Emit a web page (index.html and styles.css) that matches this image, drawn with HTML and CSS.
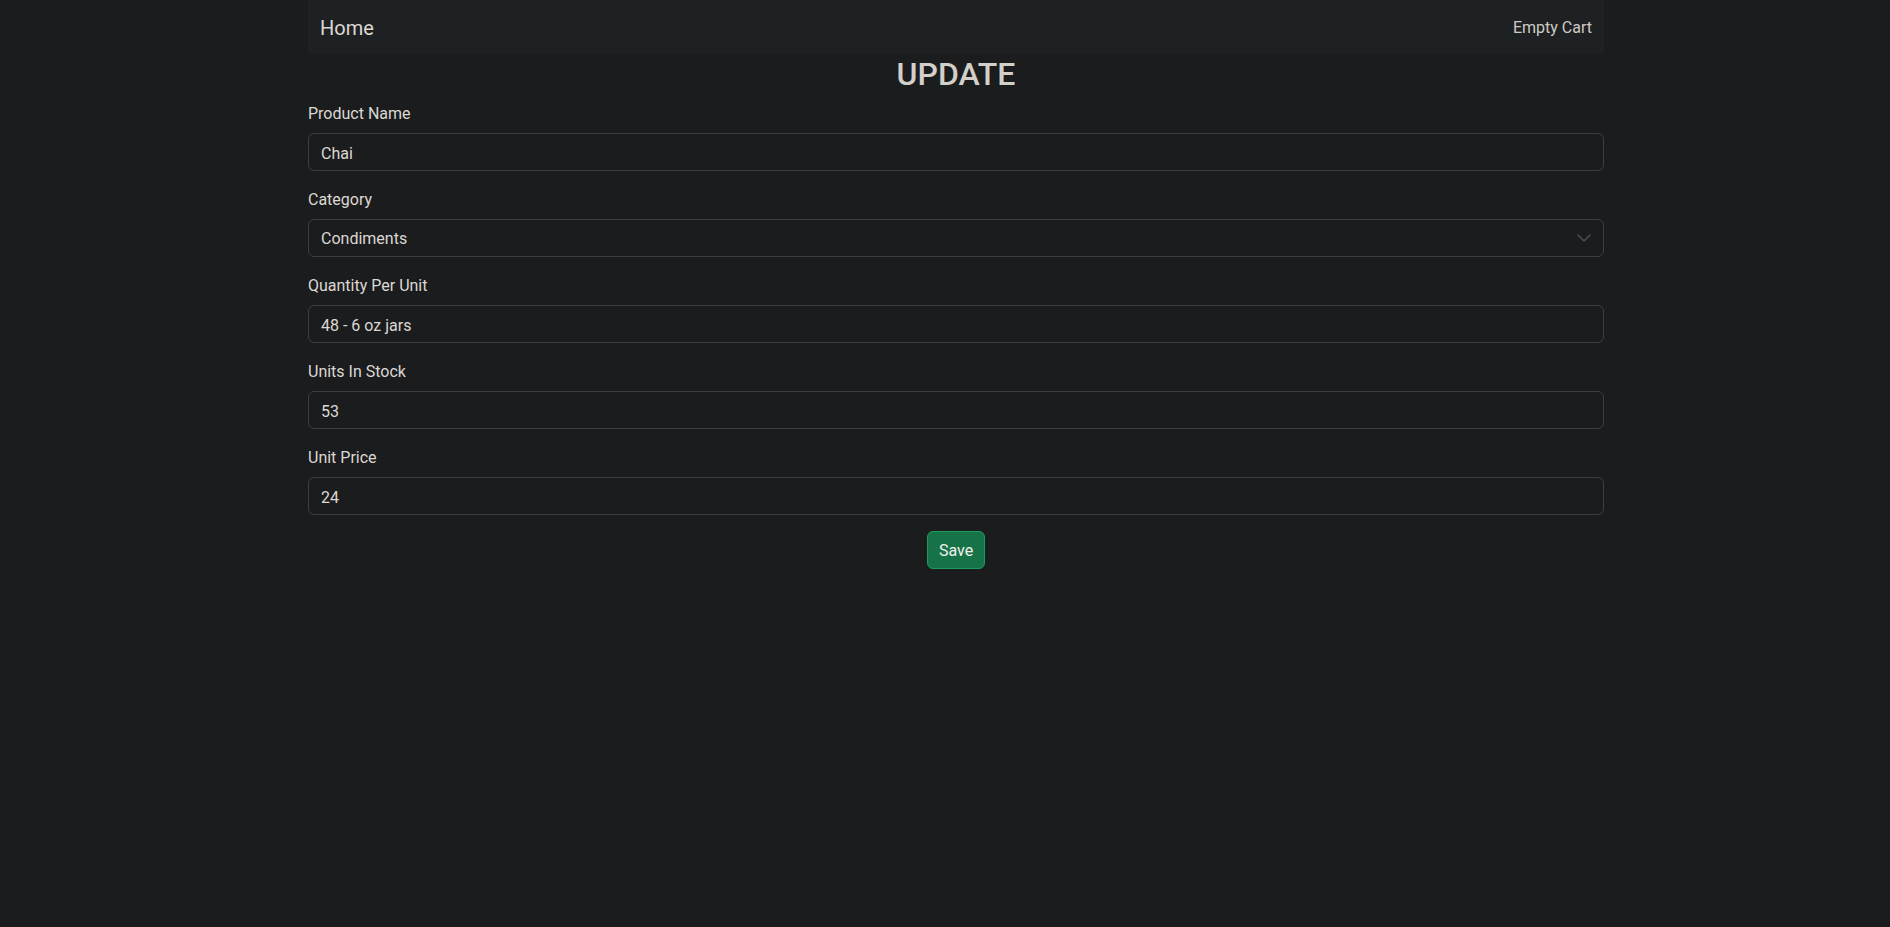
FILE: index.html
```html
<!DOCTYPE html>
<html lang="en">
<head>
<meta charset="utf-8">
<title>Update</title>
<link rel="stylesheet" href="styles.css">
</head>
<body>
<div class="container">
  <nav class="navbar">
    <a class="brand" href="#">Home</a>
    <a class="nav-link" href="#">Empty Cart</a>
  </nav>
  <h2 class="title">UPDATE</h2>
  <form class="form">
    <div class="group">
      <label class="label" for="name">Product Name</label>
      <input class="control" id="name" type="text" value="Chai">
    </div>
    <div class="group">
      <label class="label" for="cat">Category</label>
      <div class="select-wrap">
        <select class="control select" id="cat">
          <option>Condiments</option>
        </select>
        <svg class="chevron" width="16" height="16" viewBox="0 0 16 16"><path d="M2 5l6 6 6-6" fill="none" stroke="currentColor" stroke-width="1.5" stroke-linecap="round" stroke-linejoin="round"/></svg>
      </div>
    </div>
    <div class="group">
      <label class="label" for="qty">Quantity Per Unit</label>
      <input class="control" id="qty" type="text" value="48 - 6 oz jars">
    </div>
    <div class="group">
      <label class="label" for="stock">Units In Stock</label>
      <input class="control" id="stock" type="text" value="53">
    </div>
    <div class="group">
      <label class="label" for="price">Unit Price</label>
      <input class="control" id="price" type="text" value="24">
    </div>
    <div class="actions">
      <button class="btn" type="button">Save</button>
    </div>
  </form>
</div>
</body>
</html>
```
FILE: styles.css
```css
* { box-sizing: border-box; }
html, body { height: 100%; }
body {
  margin: 0;
  padding: 0 0 0 22px;
  background: #1b1c1e;
  color: #dcd8d2;
  font-family: Roboto, "Noto Sans", "Liberation Sans", sans-serif;
  font-size: 16px;
  line-height: 24px;
}
.container {
  max-width: 1296px;
  margin: 0 auto;
}
.navbar {
  height: 54px;
  background: #1e2123;
  display: flex;
  justify-content: space-between;
  align-items: center;
  padding: 2px 12px 0;
}
.brand {
  color: #dcd8d2;
  text-decoration: none;
  font-size: 20px;
  line-height: 30px;
}
.nav-link {
  color: #cfcac3;
  text-decoration: none;
  font-size: 16px;
}
.title {
  margin: 0 0 8px;
  text-align: center;
  font-size: 32px;
  line-height: 38px;
  font-weight: 500;
  color: #d3cfc9;
  padding-top: 1px;
}
.form { margin: 0; }
.group { margin-bottom: 16px; }
.label {
  display: block;
  margin-bottom: 7px;
  padding-top: 1px;
  color: #dcd8d2;
}
.control {
  display: block;
  width: 100%;
  height: 38px;
  padding: 7px 12px 5px;
  border: 1px solid #3b3f42;
  border-radius: 6px;
  background: #1b1c1e;
  color: #dcd8d2;
  font: inherit;
  outline: none;
}
.select-wrap { position: relative; }
.select {
  appearance: none;
  -webkit-appearance: none;
}
.chevron {
  position: absolute;
  right: 12px;
  top: 11px;
  color: #4b5054;
  pointer-events: none;
}
.actions {
  display: flex;
  justify-content: center;
}
.btn {
  height: 38px;
  padding: 7px 11px 5px;
  border: 1px solid #1d9a5e;
  border-radius: 6px;
  background: #157347;
  color: #f2f0ed;
  font: inherit;
  cursor: pointer;
}
```
